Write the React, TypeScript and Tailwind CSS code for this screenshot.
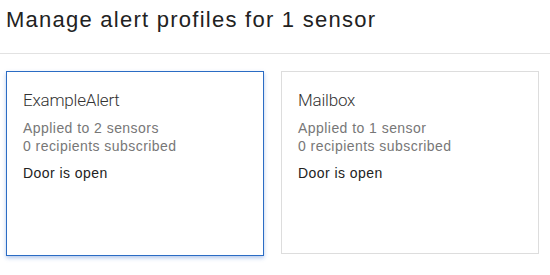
const cards = [
  { name: "ExampleAlert", applied: "Applied to 2 sensors", active: true },
  { name: "Mailbox", applied: "Applied to 1 sensor", active: false },
]

export default function App() {
  return (
    <div className="w-[550px] h-[275px] bg-white overflow-hidden" style={{ fontFamily: '"Liberation Sans", Arial, sans-serif' }}>
      <div className="h-[54px] border-b border-[#e2e2e2] px-[6px] pt-[6px]">
        <h1 className="text-[22px] leading-[28px] tracking-[1.25px] text-[#222]">Manage alert profiles for 1 sensor</h1>
      </div>
      <div className="flex gap-[17px] px-[6px] pt-[17px]">
        {cards.map((c) => (
          <div
            key={c.name}
            className={
              c.active
                ? "w-[258px] h-[185px] border border-[#2b6cc4] shadow-[0_2px_4px_rgba(40,100,200,0.35)] px-[16px] pt-[18px]"
                : "w-[258px] h-[183px] border border-[#dddddd] px-[16px] pt-[18px]"
            }
          >
            <div className="text-[17px] leading-[20px] text-[#333] font-light tracking-[-0.2px]" style={{ fontFamily: "Roboto, sans-serif" }}>
              {c.name}
            </div>
            <div className="mt-[9px] text-[14px] leading-[18px] tracking-[0.45px] text-[#777]">{c.applied}</div>
            <div className="text-[14px] leading-[18px] tracking-[0.45px] text-[#777]">0 recipients subscribed</div>
            <div className="mt-[9px] text-[14px] leading-[18px] tracking-[0.45px] text-[#222]">Door is open</div>
          </div>
        ))}
      </div>
    </div>
  )
}
